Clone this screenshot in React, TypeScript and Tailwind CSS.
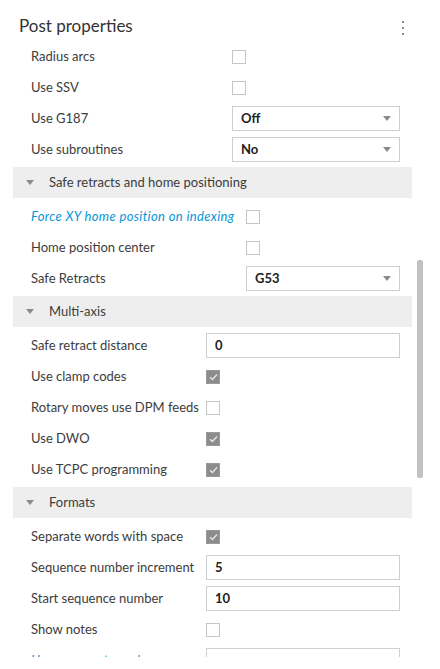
import React from "react";

type Row =
  | { kind: "check"; label: string; checked?: boolean; blue?: boolean }
  | { kind: "select"; label: string; value: string }
  | { kind: "input"; label: string; value: string; blue?: boolean };

type Section = { title?: string; labelW: string; rows: Row[] };

const sections: Section[] = [
  {
    labelW: "w-[201px]",
    rows: [
      { kind: "check", label: "Radius arcs" },
      { kind: "check", label: "Use SSV" },
      { kind: "select", label: "Use G187", value: "Off" },
      { kind: "select", label: "Use subroutines", value: "No" },
    ],
  },
  {
    title: "Safe retracts and home positioning",
    labelW: "w-[215px]",
    rows: [
      { kind: "check", label: "Force XY home position on indexing", blue: true },
      { kind: "check", label: "Home position center" },
      { kind: "select", label: "Safe Retracts", value: "G53" },
    ],
  },
  {
    title: "Multi-axis",
    labelW: "w-[175px]",
    rows: [
      { kind: "input", label: "Safe retract distance", value: "0" },
      { kind: "check", label: "Use clamp codes", checked: true },
      { kind: "check", label: "Rotary moves use DPM feeds" },
      { kind: "check", label: "Use DWO", checked: true },
      { kind: "check", label: "Use TCPC programming", checked: true },
    ],
  },
  {
    title: "Formats",
    labelW: "w-[175px]",
    rows: [
      { kind: "check", label: "Separate words with space", checked: true },
      { kind: "input", label: "Sequence number increment", value: "5" },
      { kind: "input", label: "Start sequence number", value: "10" },
      { kind: "check", label: "Show notes" },
      { kind: "input", label: "Use comment numbers", value: "", blue: true },
    ],
  },
];

function Checkbox({ checked }: { checked?: boolean }) {
  if (checked) {
    return (
      <div className="w-[14px] h-[14px] bg-[#8c8c8c] border border-[#9a9a9a] flex items-center justify-center">
        <svg width="9" height="8" viewBox="0 0 9 8">
          <path d="M1 4.2 L3.4 6.4 L8 1.6" stroke="#e6e6e6" strokeWidth="1.4" fill="none" />
        </svg>
      </div>
    );
  }
  return <div className="w-[14px] h-[14px] bg-white border border-[#c6c6c6]" />;
}

function Control({ row }: { row: Row }) {
  if (row.kind === "check") return <Checkbox checked={row.checked} />;
  return (
    <div className="flex-1 h-[25px] border border-[#cfcfcf] bg-white flex items-center pl-[8px] pr-[8px]">
      <span className="flex-1 text-[13px] font-bold text-[#222]">{row.value}</span>
      {row.kind === "select" && (
        <svg width="8" height="5" viewBox="0 0 8 5">
          <path d="M0 0 H8 L4 5 Z" fill="#8a8a8a" />
        </svg>
      )}
    </div>
  );
}

export default function App() {
  return (
    <div
      className="relative w-[440px] h-[669px] bg-white overflow-hidden"
      style={{ fontFamily: "Lato, 'Noto Sans', sans-serif" }}
    >
      {/* Titel */}
      <div className="h-[41px] flex items-start pt-[15px] pl-[19px] pr-[36px]">
        <h1 className="flex-1 text-[17px] leading-[22px] text-[#333]">Post properties</h1>
        <div className="flex flex-col gap-[4px] pt-[6px]">
          <span className="w-[2px] h-[2px] bg-[#888]" />
          <span className="w-[2px] h-[2px] bg-[#888]" />
          <span className="w-[2px] h-[2px] bg-[#888]" />
        </div>
      </div>

      {/* Liste */}
      <div className="h-[616px] overflow-hidden">
        {sections.map((s, i) => (
          <div key={i}>
            {s.title && (
              <div className="ml-[13px] w-[399px] h-[31px] bg-[#eeeeee] flex items-center">
                <svg width="8" height="5" viewBox="0 0 8 5" className="ml-[13px] mr-[15px]">
                  <path d="M0 0 H8 L4 5 Z" fill="#8a8a8a" />
                </svg>
                <span className="text-[13px] text-[#3c3c3c]">{s.title}</span>
              </div>
            )}
            <div className={s.title ? "pt-[3px] pb-[2px]" : "pb-[2px]"}>
              {s.rows.map((r, j) => (
                <div key={j} className="h-[31px] flex items-center pl-[31px] pr-[40px]">
                  <div
                    className={`${s.labelW} shrink-0 text-[13px] whitespace-nowrap ${
                      r.kind !== "select" && r.blue
                        ? "italic tracking-[0.35px] text-[#0696d7]"
                        : "text-[#3c3c3c]"
                    }`}
                  >
                    {r.label}
                  </div>
                  <Control row={r} />
                </div>
              ))}
            </div>
          </div>
        ))}
      </div>

      {/* Scrollbar */}
      <div className="absolute left-[417px] top-[260px] w-[6px] h-[218px] rounded-[2px] bg-[#c1c1c1]" />
    </div>
  );
}
